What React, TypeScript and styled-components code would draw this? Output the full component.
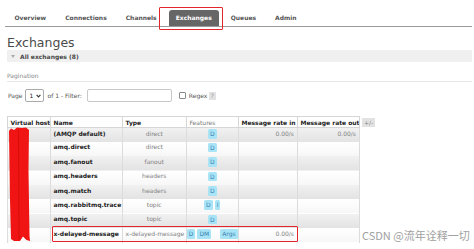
import React from 'react';
import styled, { createGlobalStyle } from 'styled-components';

const Global = createGlobalStyle`
  html, body { margin: 0; padding: 0; background: #fff; }
  body { font-family: "DejaVu Sans", Verdana, sans-serif; font-size: 6px; color: #444; }
  * { box-sizing: border-box; }
`;

const Page = styled.div`
  position: relative;
  width: 474px;
  height: 249px;
  overflow: hidden;
  padding: 10px 2px 0 7px;
`;

const Nav = styled.nav`
  display: flex;
  align-items: flex-end;
  height: 17px;
  margin-left: -2px;
  border-bottom: 1px solid #9a9a9a;
`;

const NavItem = styled.span<{ $active?: boolean }>`
  display: block;
  height: 16px;
  line-height: 16px;
  padding: 0 7px;
  margin: 0 2.5px;
  font-weight: bold;
  font-size: 6px;
  color: ${p => (p.$active ? '#fff' : '#555')};
  background: ${p => (p.$active ? '#666' : 'transparent')};
  border-radius: 3px 3px 0 0;
`;

const Title = styled.h1`
  margin: 9px 0 0;
  height: 14px;
  font-size: 12.5px;
  line-height: 14px;
  font-weight: normal;
  color: #4a4a4a;
`;

const Strip = styled.div`
  display: flex;
  align-items: center;
  height: 12px;
  padding-left: 4px;
  background: #f0f0f0;
  font-weight: bold;
  color: #484848;
`;

const Triangle = styled.span`
  width: 0;
  height: 0;
  border-left: 2px solid transparent;
  border-right: 2px solid transparent;
  border-top: 3px solid #aaa;
  margin-right: 5px;
`;

const SubHead = styled.div`
  margin-top: 9px;
  height: 11px;
  line-height: 10px;
  color: #888;
  border-bottom: 1px solid #e6e6e6;
`;

const FormRow = styled.div`
  display: flex;
  align-items: center;
  margin-top: 7px;
  height: 13px;
  color: #555;
`;

const Label = styled.span<{ $ml?: number }>`
  margin-left: ${p => p.$ml ?? 0}px;
  white-space: nowrap;
`;

const Select = styled.div`
  display: flex;
  align-items: center;
  justify-content: space-between;
  margin-left: 2px;
  width: 19px;
  height: 13px;
  padding: 0 2px 0 4px;
  border: 1px solid #aaa;
  border-radius: 2px;
  color: #222;
`;

const Input = styled.div`
  margin-left: 5px;
  width: 85px;
  height: 13px;
  border: 1px solid #c8c8c8;
  border-radius: 2px;
  background: #fff;
`;

const Checkbox = styled.span`
  margin-left: 7px;
  width: 7px;
  height: 7px;
  border: 1px solid #8a8a8a;
  border-radius: 1px;
`;

const Help = styled.span`
  margin-left: 2px;
  padding: 0 1.5px;
  line-height: 8px;
  background: #e2e2e2;
  color: #999;
`;

const Table = styled.table`
  margin-top: 14px;
  border-collapse: collapse;
  table-layout: fixed;
  width: 369px;
`;

const HeadRow = styled.tr`
  height: 11px;
`;

const Th = styled.th<{ $light?: boolean }>`
  padding: 0 2.5px;
  line-height: 9px;
  text-align: left;
  white-space: nowrap;
  overflow: hidden;
  font-weight: ${p => (p.$light ? 'normal' : 'bold')};
  color: ${p => (p.$light ? '#777' : '#222')};
  border: 1px solid #d6d6d6;
  background: #fff;
`;

const PlusTh = styled.th`
  padding: 0 0 0 2px;
  text-align: left;
  border: none;
  border-left: 1px solid #d6d6d6;
  font-weight: normal;
`;

const PlusMinus = styled.span`
  display: inline-block;
  padding: 0 2px;
  line-height: 9px;
  background: #e2e2e2;
  color: #888;
`;

const Row = styled.tr<{ $alt: boolean }>`
  height: 14.4px;
  background: ${p =>
    p.$alt
      ? 'linear-gradient(#f1f1f1, #e3e3e3)'
      : 'linear-gradient(#ffffff, #f7f7f7)'};
`;

const Td = styled.td<{ $align?: 'left' | 'center' | 'right'; $bold?: boolean }>`
  padding: 0.5px 3px 0 2.5px;
  vertical-align: top;
  line-height: 9px;
  white-space: nowrap;
  overflow: hidden;
  text-align: ${p => p.$align ?? 'left'};
  font-weight: ${p => (p.$bold ? 'bold' : 'normal')};
  color: ${p => (p.$bold ? '#222' : '#808080')};
  border-left: 1px solid #dcdcdc;
  border-right: 1px solid #dcdcdc;
`;

const Badges = styled.div`
  display: flex;
  justify-content: center;
  gap: 2px;
`;

const Badge = styled.span<{ $ml?: number }>`
  display: inline-block;
  padding: 0 2px;
  margin-left: ${p => p.$ml ?? 0}px;
  line-height: 9.5px;
  margin-top: 0.5px;
  background: #a8e4f6;
  color: #3a7fb0;
  border-radius: 1.5px;
`;

const Outline = styled.div<{ $l: number; $t: number; $w: number; $h: number }>`
  position: absolute;
  left: ${p => p.$l}px;
  top: ${p => p.$t}px;
  width: ${p => p.$w}px;
  height: ${p => p.$h}px;
  border: 1.5px solid #e3262b;
  border-radius: 1px;
  pointer-events: none;
`;

const Redaction = styled.svg`
  position: absolute;
  left: 0;
  top: 0;
  pointer-events: none;
`;

const Watermark = styled.div`
  position: absolute;
  left: 362px;
  top: 228px;
  font-family: "Noto Sans CJK SC", "DejaVu Sans", sans-serif;
  font-size: 11px;
  line-height: 15px;
  color: #a0a0a0;
  white-space: nowrap;
`;

type Ex = { name: string; type: string; features: string[]; rin?: string; rout?: string };

const rows: Ex[] = [
  { name: '(AMQP default)', type: 'direct', features: ['D'], rin: '0.00/s', rout: '0.00/s' },
  { name: 'amq.direct', type: 'direct', features: ['D'] },
  { name: 'amq.fanout', type: 'fanout', features: ['D'] },
  { name: 'amq.headers', type: 'headers', features: ['D'] },
  { name: 'amq.match', type: 'headers', features: ['D'] },
  { name: 'amq.rabbitmq.trace', type: 'topic', features: ['D', 'I'] },
  { name: 'amq.topic', type: 'topic', features: ['D'] },
  { name: 'x-delayed-message', type: 'x-delayed-message', features: ['D', 'DM', 'Args'], rin: '0.00/s' },
];

const tabs = ['Overview', 'Connections', 'Channels', 'Exchanges', 'Queues', 'Admin'];

export default function App() {
  return (
    <>
      <Global />
      <Page>
        <Nav>
          {tabs.map(t => (
            <NavItem key={t} $active={t === 'Exchanges'}>
              {t}
            </NavItem>
          ))}
        </Nav>
        <Title>Exchanges</Title>
        <Strip>
          <Triangle />
          All exchanges (8)
        </Strip>
        <SubHead>Pagination</SubHead>
        <FormRow>
          <Label $ml={1}>Page</Label>
          <Select>
            1
            <svg width="5" height="4" viewBox="0 0 5 4">
              <path d="M0.6 0.9 L2.5 2.9 L4.4 0.9" fill="none" stroke="#333" strokeWidth="1.1" />
            </svg>
          </Select>
          <Label $ml={4}>of 1 - Filter:</Label>
          <Input />
          <Checkbox />
          <Label $ml={3}>Regex</Label>
          <Help>?</Help>
        </FormRow>
        <Table>
          <colgroup>
            <col style={{ width: 43 }} />
            <col style={{ width: 72 }} />
            <col style={{ width: 64 }} />
            <col style={{ width: 52 }} />
            <col style={{ width: 59 }} />
            <col style={{ width: 62 }} />
            <col style={{ width: 17 }} />
          </colgroup>
          <thead>
            <HeadRow>
              <Th>Virtual host</Th>
              <Th>Name</Th>
              <Th>Type</Th>
              <Th $light>Features</Th>
              <Th>Message rate in</Th>
              <Th>Message rate out</Th>
              <PlusTh>
                <PlusMinus>+/-</PlusMinus>
              </PlusTh>
            </HeadRow>
          </thead>
          <tbody>
            {rows.map((r, i) => (
              <Row key={r.name} $alt={i % 2 === 0}>
                <Td />
                <Td $bold>{r.name}</Td>
                <Td $align="center">{r.type}</Td>
                <Td $align="center">
                  <Badges>
                    {r.features.map(f => (
                      <Badge key={f} $ml={f === 'Args' ? 7 : 0}>
                        {f}
                      </Badge>
                    ))}
                  </Badges>
                </Td>
                <Td $align="right">{r.rin ?? ''}</Td>
                <Td $align="right">{r.rout ?? ''}</Td>
              </Row>
            ))}
          </tbody>
        </Table>

        <Redaction width="474" height="249" viewBox="0 0 474 249">
          <path
            d="M9 131 L11 128.5 L14 130 L17 127.5 L22 128 L26 127.5 L29 130 L28.5 170 L29.5 236 L30 241 L26.5 240 L23 236.5 L20 241 L14 241 L11 239 L10 200 Z"
            fill="#f01414"
          />
          <path d="M18.5 130 L19 240" stroke="#d00a0a" strokeWidth="0.8" fill="none" />
        </Redaction>
        <Outline $l={159} $t={7} $w={64} $h={23} />
        <Outline $l={52} $t={226} $w={246} $h={16} />
        <Watermark>CSDN @流年诠释一切</Watermark>
      </Page>
    </>
  );
}
